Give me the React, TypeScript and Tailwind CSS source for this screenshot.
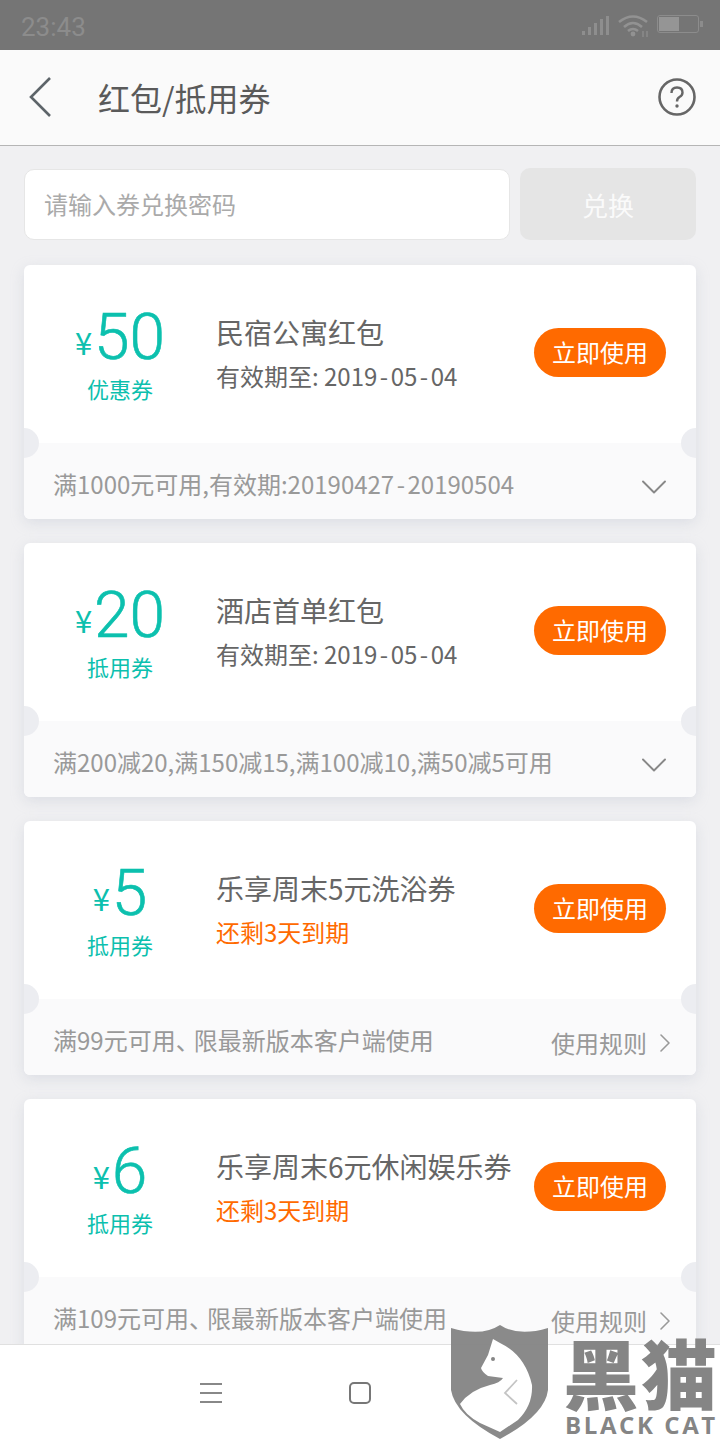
import React from 'react';
import { ChevronDown, ChevronRight } from 'lucide-react';

interface Coupon {
  amount: string;
  kind: string;
  title: string;
  sub: string;
  urgent?: boolean;
  note: string;
  rule?: boolean;
}

const coupons: Coupon[] = [
  { amount: '50', kind: '优惠券', title: '民宿公寓红包', sub: '有效期至: 2019-05-04', note: '满1000元可用,有效期:20190427-20190504' },
  { amount: '20', kind: '抵用券', title: '酒店首单红包', sub: '有效期至: 2019-05-04', note: '满200减20,满150减15,满100减10,满50减5可用' },
  { amount: '5', kind: '抵用券', title: '乐享周末5元洗浴券', sub: '还剩3天到期', urgent: true, note: '满99元可用、限最新版本客户端使用', rule: true },
  { amount: '6', kind: '抵用券', title: '乐享周末6元休闲娱乐券', sub: '还剩3天到期', urgent: true, note: '满109元可用、限最新版本客户端使用', rule: true },
];

const font = { fontFamily: '"Noto Sans CJK SC", sans-serif' };

// 连字符和顿号的宽度与系统字体不同，这里单独调整
const spaced = (text: string) =>
  text.split(/([-、])/).map((part, i) =>
    part === '-' ? (
      <span key={i} className="mx-[2.5px]">-</span>
    ) : part === '、' ? (
      <span key={i} className="-mr-[6px]">、</span>
    ) : (
      part
    ),
  );

const StatusBar = () => (
  <div className="flex h-[50px] shrink-0 items-center justify-between bg-[#757575] pl-[21px] pr-[17px]">
    <span className="mt-[3px] text-[26px] leading-none text-[#8c8c8c]" style={{ fontFamily: 'Roboto, sans-serif' }}>23:43</span>
    <svg className="mt-[2px]" width="122" height="24" viewBox="0 0 122 24" fill="none">
      <g fill="#8e8e8e">
        <rect x="1" y="17" width="3" height="4" />
        <rect x="7" y="13" width="3" height="8" />
        <rect x="13" y="9" width="3" height="12" />
        <rect x="19" y="5" width="3" height="16" />
        <rect x="25" y="2" width="3" height="19" />
      </g>
      <g stroke="#929292" strokeWidth="2.6" fill="none">
        <path d="M38 8 Q52 -3 66 8" />
        <path d="M43 13 Q52 5 61 13" />
        <path d="M47 17 Q52 13 57 17" />
      </g>
      <circle cx="52" cy="20" r="2.4" fill="#929292" />
      <path d="M62 17v6M66 17v6" stroke="#8a8a8a" strokeWidth="1.5" />
      <rect x="76.5" y="1.5" width="41" height="17" rx="2.5" stroke="#8c8c8c" />
      <rect x="78" y="3" width="20" height="14" fill="#959595" />
      <rect x="119" y="7" width="3" height="6" fill="#8c8c8c" />
    </svg>
  </div>
);

const Header = () => (
  <div className="flex h-[96px] shrink-0 items-center border-b border-[#b5b5b5] bg-[#fafafa] pb-[2px] pl-[28px] pr-[24px]">
    <svg width="24" height="42" viewBox="0 0 24 42" fill="none">
      <path d="M22 2 L3 21 L22 40" stroke="#5d6469" strokeWidth="2.6" />
    </svg>
    <span className="ml-[46px] flex-1 text-[32px] leading-none text-[#5a5a5a]">红包/抵用券</span>
    <svg width="38" height="38" viewBox="0 0 38 38" fill="none">
      <circle cx="19" cy="19" r="17.5" stroke="#666" strokeWidth="2.6" />
      <path d="M13.5 15 Q13.5 9.5 19 9.5 Q24.5 9.5 24.5 14.5 Q24.5 17.5 21.5 19 Q19 20.5 19 23.5" stroke="#666" strokeWidth="2.4" />
      <circle cx="19" cy="28" r="1.7" fill="#666" />
    </svg>
  </div>
);

const RedeemRow = () => (
  <div className="flex items-stretch gap-[10px]">
    <div className="mt-px flex h-[71px] w-[486px] items-center rounded-[10px] border border-[#e6e6e6] bg-white pb-[2px] pl-[19px] text-[24px] text-[#aaa]">
      请输入券兑换密码
    </div>
    <div className="flex h-[72px] w-[176px] items-center justify-center rounded-[10px] bg-[#e5e5e5] text-[26px] text-[#fafafa]">
      兑换
    </div>
  </div>
);

const CouponCard = ({ coupon }: { coupon: Coupon }) => (
  <div className="relative shrink-0 rounded-[6px] bg-white shadow-[0_4px_14px_rgba(170,175,195,0.28)]">
    <div className="flex h-[178px] items-center pr-[30px]">
      <div className="flex w-[192px] shrink-0 flex-col items-center pb-[3px]">
        <div className="flex h-[62px] items-end text-[#0cc0ae]">
          <span className="mb-[3px] mr-[2px] text-[31px] leading-[40px]">¥</span>
          <span className="-mb-[8px] text-[64px] font-light leading-[70px] [-webkit-text-stroke:0.6px_#0cc0ae]" style={{ fontFamily: 'Roboto, sans-serif' }}>{coupon.amount}</span>
        </div>
        <span className="mt-[8px] text-[22px] leading-[30px] text-[#0cc0ae]">{coupon.kind}</span>
      </div>
      <div className="flex min-w-0 flex-1 flex-col">
        <span className="whitespace-nowrap text-[28px] leading-[36px] text-[#666]">{coupon.title}</span>
        <span className={`mt-[8px] whitespace-nowrap text-[24px] leading-[36px] ${coupon.urgent ? 'text-[#ff6a00]' : 'text-[#666]'}`}>{spaced(coupon.sub)}</span>
      </div>
      <div className="mb-[4px] flex h-[49px] w-[132px] shrink-0 items-center justify-center rounded-full bg-[#ff6a00] text-[24px] text-white">
        立即使用
      </div>
    </div>
    <div className="flex h-[76px] items-center justify-between rounded-b-[6px] bg-[#fafafb] pl-[29px] pt-[6px] text-[24px] text-[#999]">
      <span className="whitespace-nowrap">{spaced(coupon.note)}</span>
      {coupon.rule ? (
        <span className="mr-[15px] mt-[6px] flex items-center gap-[2px] whitespace-nowrap">
          使用规则
          <ChevronRight className="h-[32px] w-[32px]" strokeWidth={1.2} />
        </span>
      ) : (
        <ChevronDown className="mr-[20px] mt-[6px] h-[44px] w-[44px] text-[#888]" strokeWidth={1.05} />
      )}
    </div>
    {/* 票券两侧的缺口 */}
    <div className="absolute left-0 top-[163px] h-[30px] w-[15px] rounded-r-full bg-[#ecedf1]" />
    <div className="absolute right-0 top-[163px] h-[30px] w-[15px] rounded-l-full bg-[#ecedf1]" />
  </div>
);

const BottomNav = () => (
  <div className="flex h-[96px] shrink-0 items-center justify-center gap-[126px] border-t border-[#e0e0e0] bg-white pl-[1px]">
    <svg width="22" height="20" viewBox="0 0 22 20" fill="#888">
      <rect y="0" width="22" height="2" />
      <rect y="9" width="22" height="2" />
      <rect y="18" width="22" height="2" />
    </svg>
    <svg width="24" height="24" viewBox="0 0 24 24" fill="none">
      <rect x="2" y="2" width="20" height="20" rx="4" stroke="#777" strokeWidth="2" />
    </svg>
    <div className="w-[24px]" />
  </div>
);

// 右下角水印
const Watermark = () => (
  <div className="pointer-events-none absolute bottom-0 right-0 h-[160px] w-[300px]">
    <svg className="absolute left-0 top-0" width="300" height="160" viewBox="0 0 300 160">
      <path d="M31 48 Q62 57 80 45 Q98 57 128 48 L128 110 Q125 135 80 159 Q35 135 31 110 Z" fill="#858585" fillOpacity="0.96" />
      <path d="M73 59 L80 63 Q105 75 112 105 Q113 125 98 140 L80 152 L60 143 Q45 135 40 124 Q50 110 70 105 Q80 103 83 98 L68 96 Q62 92 61 88 L68 75 Z" fill="#fff" />
      <circle cx="73" cy="79" r="2" fill="#858585" />
      <path d="M97 100 L85 113 L97 124" stroke="#c4c4c4" strokeWidth="1.8" fill="none" />
    </svg>
    <span className="absolute left-[143px] top-[48px] whitespace-nowrap text-[76px] font-black leading-[86px] tracking-[2px] text-[#858585]">黑猫</span>
    <span className="absolute left-[145px] top-[131px] whitespace-nowrap text-[24px] font-bold leading-[28px] tracking-[2.6px] text-[#858585]" style={{ fontFamily: '"Open Sans", sans-serif' }}>BLACK CAT</span>
  </div>
);

export default function App() {
  return (
    <div className="relative flex h-[1440px] w-[720px] flex-col overflow-hidden bg-[#f0f0f2]" style={font}>
      <StatusBar />
      <Header />
      <div className="flex min-h-0 flex-1 flex-col gap-[25px] overflow-hidden px-[24px] pt-[22px]">
        <RedeemRow />
        <div className="flex flex-col gap-[24px]">
          {coupons.map(c => (
            <CouponCard key={c.amount} coupon={c} />
          ))}
        </div>
      </div>
      <BottomNav />
      <Watermark />
    </div>
  );
}
